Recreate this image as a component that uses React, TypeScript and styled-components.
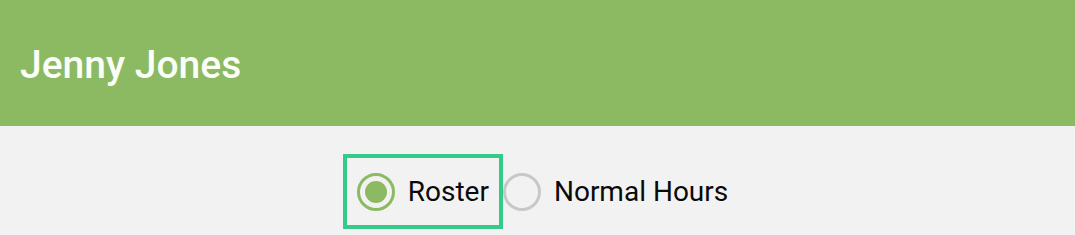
import styled, { createGlobalStyle } from "styled-components";

const GlobalStyle = createGlobalStyle`
  html, body {
    margin: 0;
    padding: 0;
    background: #f2f2f2;
    font-family: Roboto, "Liberation Sans", sans-serif;
  }
`;

const Page = styled.div`
  width: 1075px;
  height: 235px;
  background: #f2f2f2;
  overflow: hidden;
`;

const Header = styled.header`
  height: 126px;
  background: #8cba62;
  display: flex;
  align-items: center;
  padding: 3px 0 0 20px;
  box-sizing: border-box;
`;

const Title = styled.h1`
  margin: 0;
  color: #fbfdf7;
  font-size: 39px;
  font-weight: 500;
`;

const Options = styled.div`
  display: flex;
  justify-content: center;
  padding-top: 28px;
  padding-left: 10px;
`;

const Option = styled.label<{ $focused?: boolean }>`
  display: flex;
  align-items: center;
  gap: 13px;
  height: 75px;
  box-sizing: border-box;
  padding: 0 10px 0 ${(p) => (p.$focused ? "10px" : "0")};
  border: 4px solid ${(p) => (p.$focused ? "#33cb8b" : "transparent")};
  border-left-width: ${(p) => (p.$focused ? "4px" : "0")};
  font-size: 28px;
  color: #0a0a0a;
  cursor: pointer;
`;

const Radio = styled.span<{ $checked?: boolean }>`
  width: 38px;
  height: 38px;
  box-sizing: border-box;
  border-radius: 50%;
  border: 3.5px solid ${(p) => (p.$checked ? "#8cba62" : "#c8c8c8")};
  display: flex;
  align-items: center;
  justify-content: center;

  &::after {
    content: "";
    width: 22px;
    height: 22px;
    border-radius: 50%;
    background: ${(p) => (p.$checked ? "#8cba62" : "transparent")};
  }
`;

export default function App() {
  return (
    <Page>
      <GlobalStyle />
      <Header>
        <Title>Jenny Jones</Title>
      </Header>
      <Options>
        <Option $focused>
          <Radio $checked />
          Roster
        </Option>
        <Option>
          <Radio />
          Normal Hours
        </Option>
      </Options>
    </Page>
  );
}
